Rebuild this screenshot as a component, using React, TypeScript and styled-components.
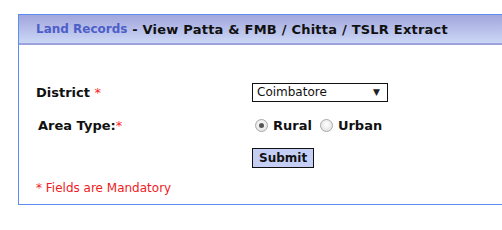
import styled, { createGlobalStyle } from 'styled-components';

const GlobalStyle = createGlobalStyle`
  html, body {
    margin: 0;
    padding: 0;
    background: #ffffff;
    overflow: hidden;
  }
  body {
    font-family: 'DejaVu Sans', Verdana, sans-serif;
  }
`;

const Page = styled.div`
  padding: 14px 0 0 18px;
`;

const Panel = styled.div`
  border: 1px solid #5b8ef0;
  border-right: none;
  background: #ffffff;
`;

const Header = styled.div`
  height: 28px;
  display: flex;
  align-items: center;
  padding-left: 17px;
  background: linear-gradient(#a1a6dc, #cbd7f6);
  border-bottom: 2px solid #9ba1da;
  font-size: 13px;
  font-weight: bold;
  letter-spacing: 0.22px;
  color: #111111;
  white-space: nowrap;
  overflow: hidden;
`;

const Crumb = styled.span`
  color: #4e5ec8;
  font-size: 12px;
  letter-spacing: 0;
`;

const Body = styled.div`
  padding: 37px 0 8px 17px;
`;

const FormGrid = styled.div`
  display: grid;
  grid-template-columns: 216px auto;
  grid-auto-rows: 20px;
  row-gap: 13px;
  align-items: center;
`;

const Label = styled.div<{ $indent?: number }>`
  font-size: 13px;
  font-weight: bold;
  color: #111111;
  padding-left: ${(p) => p.$indent ?? 0}px;
`;

const Star = styled.span`
  color: #ff1a1a;
  font-weight: normal;
`;

const SelectBox = styled.div`
  width: 123px;
  height: 17px;
  border: 1px solid #111111;
  display: flex;
  align-items: center;
  justify-content: space-between;
  padding: 0 7px 0 4px;
  font-size: 12px;
  color: #111111;
`;

const Arrow = styled.span`
  font-size: 9px;
  color: #222222;
`;

const RadioRow = styled.div`
  display: flex;
  align-items: center;
  padding: 1px 0 0 3px;
`;

const RadioDot = styled.span<{ $checked?: boolean }>`
  width: 11px;
  height: 11px;
  border-radius: 50%;
  border: 1px solid #a8a8a8;
  background: radial-gradient(circle at 50% 40%, #ffffff 0%, #dcdcdc 100%);
  display: inline-flex;
  align-items: center;
  justify-content: center;
  margin-right: 5px;
  &::after {
    content: '';
    display: ${(p) => (p.$checked ? 'block' : 'none')};
    width: 5px;
    height: 5px;
    border-radius: 50%;
    background: #555555;
  }
`;

const RadioText = styled.span`
  font-size: 13px;
  font-weight: bold;
  color: #111111;
  margin-right: 8px;
`;

const SubmitButton = styled.button`
  justify-self: start;
  height: 20px;
  padding: 0 6px;
  border: 1px solid #111111;
  background: #c5cff5;
  font-family: 'DejaVu Sans', Verdana, sans-serif;
  font-size: 12px;
  font-weight: bold;
  color: #111111;
  border-radius: 0;
`;

const Note = styled.div`
  margin-top: 13px;
  font-size: 12px;
  line-height: 15px;
  color: #ee1c25;
`;

export default function App() {
  return (
    <>
      <GlobalStyle />
      <Page>
        <Panel>
          <Header>
            <Crumb>Land Records</Crumb>&nbsp;- View Patta &amp; FMB / Chitta / TSLR Extract
          </Header>
          <Body>
            <FormGrid>
              <Label>
                District <Star>*</Star>
              </Label>
              <SelectBox>
                <span>Coimbatore</span>
                <Arrow>▼</Arrow>
              </SelectBox>
              <Label $indent={2}>
                Area Type:<Star>*</Star>
              </Label>
              <RadioRow>
                <RadioDot $checked />
                <RadioText>Rural</RadioText>
                <RadioDot />
                <RadioText>Urban</RadioText>
              </RadioRow>
              <div />
              <SubmitButton>Submit</SubmitButton>
            </FormGrid>
            <Note>* Fields are Mandatory</Note>
          </Body>
        </Panel>
      </Page>
    </>
  );
}
